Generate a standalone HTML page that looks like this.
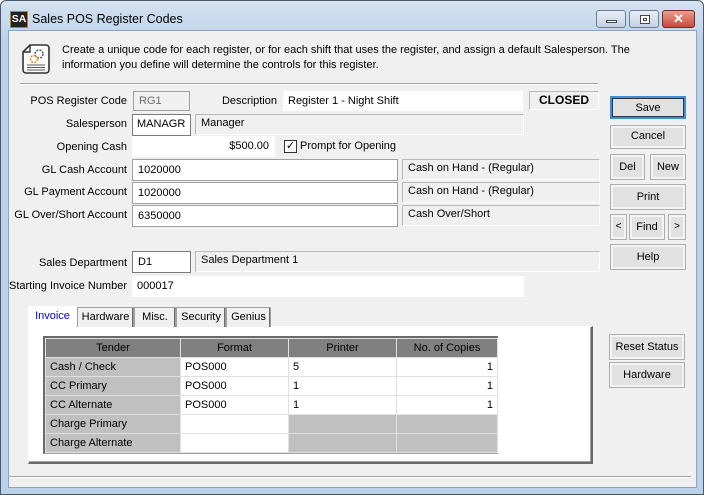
<!DOCTYPE html>
<html><head><meta charset="utf-8"><style>
*{box-sizing:border-box;margin:0;padding:0}
body{width:704px;height:495px;overflow:hidden;font-family:"Liberation Sans",Arial,sans-serif;font-size:11px;color:#000;background:#fff}
.win{position:absolute;left:0;top:0;width:704px;height:495px;background:linear-gradient(#d5e2f1,#bcd2ea 40px,#bcd2ea);border:1px solid #4a5a6a;border-radius:6px 6px 0 0}
.client{position:absolute;left:8px;top:30px;width:689px;height:458px;background:#f0f0f0;border:1px solid #8ea3bb}
.a{position:absolute}
.lbl{position:absolute;text-align:right;white-space:nowrap}
.box{position:absolute;background:#fff;border:1px solid #a0a0a0;padding:3px 0 0 5px;white-space:nowrap}
.ro{position:absolute;background:#f0f0f0;border:1px solid #b8b8b8;border-right-color:#fff;border-bottom-color:#fff;padding:2px 0 0 5px;white-space:nowrap}
.wf{position:absolute;background:#fff;padding:4px 0 0 5px;white-space:nowrap}
.btn{position:absolute;background:#e1e1e1;border:1px solid #adadad;box-shadow:inset 0 0 0 2px #f4f4f4;text-align:center;line-height:20px}
table{border-collapse:collapse;position:absolute;left:45px;top:338px}
td{border:1px solid #e0e0e0;height:19px;padding:0 4px;white-space:nowrap}
td.h{background:#808080;text-align:center;color:#000}
td.t{background:#c0c0c0}
td.w{background:#fff}
td.g{background:#c0c0c0}
.tab{position:absolute;top:307px;height:20px;border:1px solid #a0a0a0;border-bottom:none;background:#f0f0f0;text-align:center;line-height:19px;box-shadow:inset -1px 0 0 #696969}
</style></head><body>
<div class="win">
<div class="a" style="left:9px;top:10px;width:18px;height:17px;background:#222;border:1px solid #c87a18;color:#fff;font-weight:bold;font-size:10.5px;line-height:15px;text-align:center">SA</div>
<div class="a" style="left:31px;top:11px;font-size:12.5px;color:#000">Sales POS Register Codes</div>
<div class="a" style="left:595px;top:9px;width:30px;height:18px;border:1px solid #6c7e96;border-radius:3px;background:linear-gradient(#e8eef6,#c4d2e4)"><div class="a" style="left:9px;top:9px;width:11px;height:3px;background:#fff;border:1px solid #445"></div></div>
<div class="a" style="left:628px;top:9px;width:30px;height:18px;border:1px solid #6c7e96;border-radius:3px;background:linear-gradient(#e8eef6,#c4d2e4)"><div class="a" style="left:10px;top:4px;width:10px;height:9px;border:1px solid #445;background:#fff;box-shadow:inset 0 0 0 2px #fff,inset 0 0 0 3px #445"></div></div>
<div class="a" style="left:661px;top:9px;width:33px;height:18px;border:1px solid #7a2a22;border-radius:3px;background:linear-gradient(#e8a090,#c8483a);color:#fff;font-weight:bold;font-size:13px;text-align:center;line-height:16px">✕</div>
</div>
<div class="client"></div>
<svg class="a" style="left:22px;top:44px" width="28" height="30" viewBox="0 0 28 30"><path d="M8 1H24a3 3 0 0 1 3 3V26a3 3 0 0 1-3 3H4a3 3 0 0 1-3-3V8Z" fill="#fff" stroke="#333" stroke-width="1.6"/><path d="M1 8H8V1" fill="none" stroke="#333" stroke-width="1.4"/><circle cx="17" cy="10" r="4" fill="none" stroke="#555" stroke-width="1.5" stroke-dasharray="2 1.2"/><circle cx="12" cy="15" r="3.5" fill="none" stroke="#e88a1a" stroke-width="1.5" stroke-dasharray="2 1.2"/><path d="M5 21H23M5 23.5H23M5 26H23" stroke="#555" stroke-width="1"/></svg>
<div class="a" style="left:62px;top:43px;line-height:15px">Create a unique code for each register, or for each shift that uses the register, and assign a default Salesperson. The<br>information you define will determine the controls for this register.</div>
<div class="a" style="left:20px;top:83px;width:578px;height:2px;border-top:1px solid #a0a0a0;border-bottom:1px solid #fff"></div>
<div class="lbl" style="right:577px;top:95px">POS Register Code</div>
<div class="ro" style="left:133px;top:91px;width:57px;height:20px;border:1px solid #a0a0a0;color:#6d6d6d;padding-top:3px">RG1</div>
<div class="lbl" style="right:427px;top:95px">Description</div>
<div class="wf" style="left:283px;top:91px;width:240px;height:20px">Register 1 - Night Shift</div>
<div class="ro" style="left:529px;top:91px;width:70px;height:19px;font-weight:bold;font-size:12px;text-align:center;padding:1px 0 0">CLOSED</div>
<div class="lbl" style="right:577px;top:118px">Salesperson</div>
<div class="box" style="left:132px;top:114px;width:59px;height:22px;border-color:#7a7a7a;padding-left:4px">MANAGR</div>
<div class="ro" style="left:195px;top:114px;width:329px;height:21px">Manager</div>
<div class="lbl" style="right:577px;top:141px">Opening Cash</div>
<div class="wf" style="left:132px;top:136px;width:143px;height:21px;text-align:right;padding-right:6px">$500.00</div>
<div class="a" style="left:284px;top:140px;width:13px;height:13px;border:1px solid #333;background:#fff;font-size:11px;line-height:11px;text-align:center">✓</div>
<div class="a" style="left:300px;top:140px">Prompt for Opening</div>
<div class="lbl" style="right:577px;top:164px">GL Cash Account</div>
<div class="box" style="left:132px;top:159px;width:266px;height:22px;padding-top:4px">1020000</div>
<div class="ro" style="left:402px;top:159px;width:198px;height:21px">Cash on Hand - (Regular)</div>
<div class="lbl" style="right:577px;top:186px">GL Payment Account</div>
<div class="box" style="left:132px;top:182px;width:266px;height:22px;padding-top:4px">1020000</div>
<div class="ro" style="left:402px;top:182px;width:198px;height:21px">Cash on Hand - (Regular)</div>
<div class="lbl" style="right:577px;top:209px">GL Over/Short Account</div>
<div class="box" style="left:132px;top:205px;width:266px;height:22px;padding-top:4px">6350000</div>
<div class="ro" style="left:402px;top:205px;width:198px;height:21px">Cash Over/Short</div>
<div class="lbl" style="right:577px;top:257px">Sales Department</div>
<div class="box" style="left:132px;top:251px;width:59px;height:22px;border-color:#7a7a7a;padding-top:4px">D1</div>
<div class="ro" style="left:195px;top:251px;width:405px;height:21px">Sales Department 1</div>
<div class="lbl" style="right:577px;top:280px">Starting Invoice Number</div>
<div class="wf" style="left:132px;top:276px;width:392px;height:21px">000017</div>
<div class="btn" style="left:610px;top:96px;width:76px;height:23px;border:2px solid #3c8ee0;box-shadow:inset 0 0 0 1px #333">Save</div>
<div class="btn" style="left:610px;top:125px;width:76px;height:24px">Cancel</div>
<div class="btn" style="left:610px;top:154px;width:35px;height:26px;line-height:24px">Del</div>
<div class="btn" style="left:650px;top:154px;width:36px;height:26px;line-height:24px">New</div>
<div class="btn" style="left:610px;top:184px;width:76px;height:26px;line-height:24px">Print</div>
<div class="btn" style="left:610px;top:214px;width:17px;height:26px;line-height:24px;font-size:10px">&lt;</div>
<div class="btn" style="left:629px;top:214px;width:36px;height:26px;line-height:24px">Find</div>
<div class="btn" style="left:668px;top:214px;width:18px;height:26px;line-height:24px;font-size:10px">&gt;</div>
<div class="btn" style="left:610px;top:244px;width:76px;height:26px;line-height:24px">Help</div>
<div class="btn" style="left:609px;top:334px;width:76px;height:26px;line-height:24px">Reset Status</div>
<div class="btn" style="left:609px;top:362px;width:76px;height:26px;line-height:24px">Hardware</div>
<div class="a" style="left:28px;top:326px;width:565px;height:138px;background:#fff;border:1px solid #fff;border-right:2px solid #696969;border-bottom:2px solid #696969;box-shadow:inset -1px -1px 0 #a0a0a0"></div>
<div class="tab" style="left:28px;width:49px;top:306px;height:21px;background:#fff;color:#0000e0;box-shadow:none;border-color:#fff">Invoice</div>
<div class="tab" style="left:77px;width:57px">Hardware</div>
<div class="tab" style="left:134px;width:42px">Misc.</div>
<div class="tab" style="left:176px;width:50px">Security</div>
<div class="tab" style="left:226px;width:45px">Genius</div>
<div class="a" style="left:43px;top:336px;width:455px;height:118px;border:1px solid #a0a0a0;border-left:2px solid #696969;border-top:2px solid #696969;background:#f0f0f0"></div>
<table>
<tr><td class="h" style="width:135px">Tender</td><td class="h" style="width:108px">Format</td><td class="h" style="width:108px">Printer</td><td class="h" style="width:101px">No. of Copies</td></tr>
<tr><td class="t">Cash / Check</td><td class="w">POS000</td><td class="w">5</td><td class="w" style="text-align:right">1</td></tr>
<tr><td class="t">CC Primary</td><td class="w">POS000</td><td class="w">1</td><td class="w" style="text-align:right">1</td></tr>
<tr><td class="t">CC Alternate</td><td class="w">POS000</td><td class="w">1</td><td class="w" style="text-align:right">1</td></tr>
<tr><td class="t">Charge Primary</td><td class="w"></td><td class="g"></td><td class="g"></td></tr>
<tr><td class="t">Charge Alternate</td><td class="w"></td><td class="g"></td><td class="g"></td></tr>
</table>
<div class="a" style="left:9px;top:476px;width:682px;height:2px;border-top:1px solid #a0a0a0;border-bottom:1px solid #fff"></div>
</body></html>
